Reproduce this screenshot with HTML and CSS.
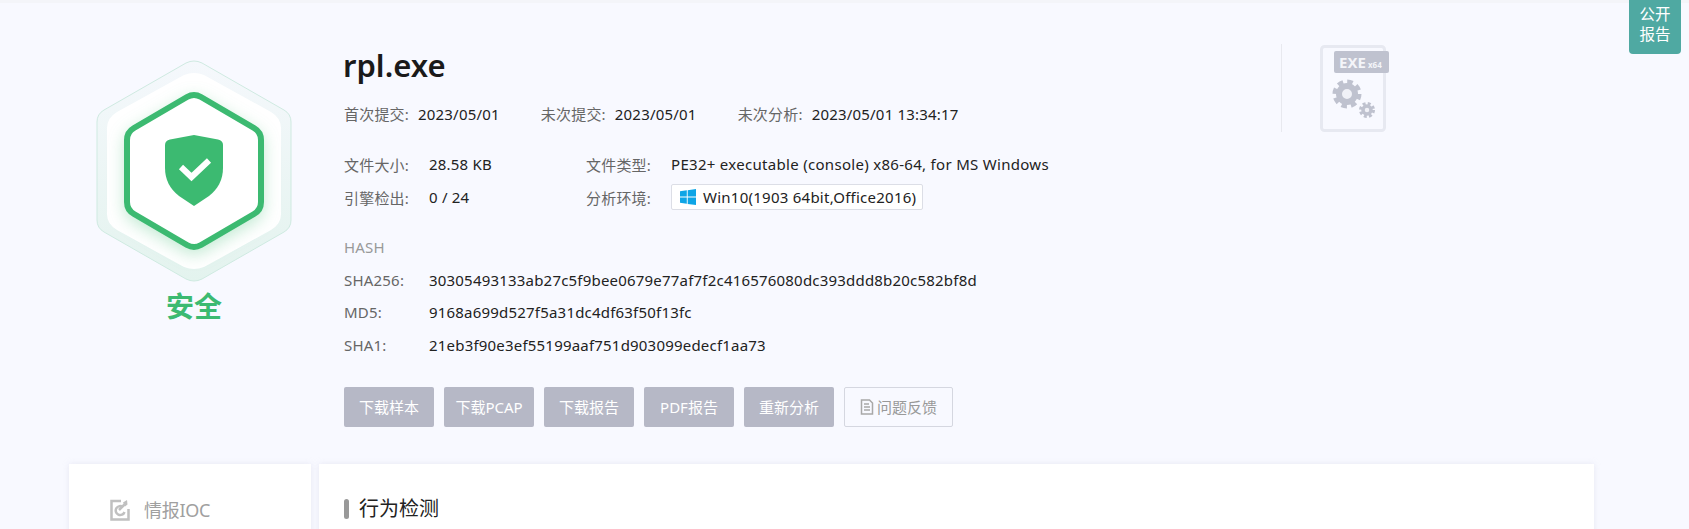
FILE: index.html
```html
<!doctype html>
<html>
  <head>
    <title>rpl.exe - 分析报告</title>
    <link rel="stylesheet" href="styles.css">
  </head>
  <body>
    <div class="top-strip"></div>
    <a class="public-report">公开<br>报告</a>

    <div class="summary">
      <div class="verdict">
        <svg class="hex" width="220" height="240" viewBox="0 0 220 240">
          <defs>
            <linearGradient id="hex-outer" x1="0" y1="0" x2="0" y2="1">
              <stop offset="0" stop-color="#f5f8fc"/>
              <stop offset="1" stop-color="#e3f3ee"/>
            </linearGradient>
          </defs>
          <path class="hex-outer" d="M102 13Q110 9 118 13L200 60Q207 64 207 72L207 170Q207 178 200 182L118 229Q110 233 102 229L20 182Q13 178 13 170L13 72Q13 64 20 60Z"/>
          <path class="hex-middle" d="M100 25Q110 21 120 25L187 62Q197 68 197 78L197 164Q197 174 187 180L120 217Q110 221 100 217L33 180Q23 174 23 164L23 78Q23 68 33 62Z"/>
          <path class="hex-ring" d="M103 47Q110 43 117 47L170 78Q177 82 177 90L177 152Q177 160 170 164L117 195Q110 199 103 195L50 164Q43 160 43 152L43 90Q43 82 50 78Z"/>
          <path class="shield" d="M110 85L134 89.500Q139 90.500 139 95L139 118Q139 135 125 146L110 156L95 146Q81 135 81 118L81 95Q81 90.500 86 89.500Z"/>
          <path class="shield-check" d="M97 117L107.500 127L125 110.500"/>
        </svg>
        <div class="verdict-text">安全</div>
      </div>

      <div class="details">
        <h1 class="file-name">rpl.exe</h1>
        <div class="row dates">
          <span class="pair"><span class="label">首次提交:</span><span class="value">2023/05/01</span></span>
          <span class="pair"><span class="label">未次提交:</span><span class="value">2023/05/01</span></span>
          <span class="pair"><span class="label">未次分析:</span><span class="value">2023/05/01 13:34:17</span></span>
        </div>

        <div class="info-grid">
          <span class="label">文件大小:</span>
          <span class="value">28.58 KB</span>
          <span class="label">文件类型:</span>
          <span class="value wide">PE32+ executable (console) x86-64, for MS Windows</span>
          <span class="label">引擎检出:</span>
          <span class="value">0 / 24</span>
          <span class="label">分析环境:</span>
          <span class="env-tag">
            <svg width="16" height="16" viewBox="0 0 16 16">
              <path class="win" d="M0 2.300L6.800 1.300V7.600H0ZM7.700 1.200L16 0V7.600H7.700ZM0 8.500H6.800V14.800L0 13.800ZM7.700 8.500H16V16L7.700 14.900Z"/>
            </svg>
            Win10(1903 64bit,Office2016)
          </span>
        </div>

        <div class="hash-title">HASH</div>
        <div class="hash-row"><span class="label">SHA256:</span><span class="value">30305493133ab27c5f9bee0679e77af7f2c416576080dc393ddd8b20c582bf8d</span></div>
        <div class="hash-row"><span class="label">MD5:</span><span class="value">9168a699d527f5a31dc4df63f50f13fc</span></div>
        <div class="hash-row"><span class="label">SHA1:</span><span class="value">21eb3f90e3ef55199aaf751d903099edecf1aa73</span></div>

        <div class="actions">
          <button class="btn">下载样本</button>
          <button class="btn">下载PCAP</button>
          <button class="btn">下载报告</button>
          <button class="btn">PDF报告</button>
          <button class="btn">重新分析</button>
          <button class="btn btn-outline">
            <svg width="14" height="16" viewBox="0 0 14 16">
              <path class="note" d="M1.500 1H9.500L12.500 4V15H1.500ZM4 5H9M4 8H10M4 11H10"/>
            </svg>
            问题反馈
          </button>
        </div>
      </div>

      <div class="file-type">
        <svg width="72" height="92" viewBox="0 0 72 92">
          <rect class="file-outline" x="2.500" y="2.500" width="63" height="84" rx="3"/>
          <rect class="file-tag" x="15" y="7" width="55" height="22" rx="2"/>
          <text class="file-ext" x="20" y="24">EXE</text>
          <text class="file-arch" x="49" y="24">x64</text>
          <circle class="gear-teeth" cx="28" cy="50" r="12" stroke-dasharray="5.400 4"/>
          <circle class="gear-body" cx="28" cy="50" r="8" stroke-width="6"/>
          <circle class="gear-teeth small" cx="48" cy="66" r="6.500" stroke-dasharray="2.900 2.200"/>
          <circle class="gear-body" cx="48" cy="66" r="4" stroke-width="3.500"/>
        </svg>
      </div>
    </div>

    <div class="report">
      <div class="side-menu">
        <div class="menu-item">
          <svg width="20" height="22" viewBox="0 0 20 22">
            <path class="ioc-box" d="M11 2H1.500V20.500H18.500V10"/>
            <path class="ioc-mark" d="M13 8A4.500 4.500 0 1 0 14.500 13M9 11L14.500 5.500"/>
            <path class="ioc-tip" d="M13 3.500L17 1L17.500 5.500L15 7.500Z"/>
          </svg>
          情报IOC
        </div>
      </div>
      <div class="content">
        <h2 class="section-title">行为检测</h2>
      </div>
    </div>
  </body>
</html>
```

FILE: styles.css
```css
* {
  box-sizing: border-box;
  margin: 0;
  padding: 0;
}

html,
body {
  height: 100%;
  overflow: hidden;
}

body {
  font-family: 'Noto Sans', 'Noto Sans CJK SC', sans-serif;
  font-size: 15px;
  color: #222;
  background: #f8f9ff;
}

.top-strip {
  height: 3px;
  background: #f4f5f9;
}

.public-report {
  position: absolute;
  top: 0;
  left: 1629px;
  width: 52px;
  height: 54px;
  padding-top: 4px;
  background: #4fa9a2;
  border-radius: 0 0 4px 4px;
  color: #fff;
  font-size: 15.500px;
  line-height: 20px;
  text-align: center;
}

.summary {
  display: flex;
  height: 461px;
  padding-left: 84px;
}

/* verdict hexagon */
.verdict {
  width: 220px;
  padding-top: 47px;
  flex-shrink: 0;
}

.hex {
  display: block;
}

.hex-outer {
  fill: url(#hex-outer);
  stroke: #cfeae1;
  stroke-width: 1;
}

.hex-middle {
  fill: #fff;
}

.hex-ring {
  fill: #fff;
  stroke: #3cba71;
  stroke-width: 6;
  filter: drop-shadow(0 5px 8px rgba(60, 186, 113, 0.3));
}

.shield {
  fill: #3cba71;
}

.shield-check {
  fill: none;
  stroke: #fff;
  stroke-width: 6;
}

.verdict-text {
  margin-top: -2px;
  text-align: center;
  font-size: 28px;
  font-weight: 700;
  line-height: 36px;
  color: #3cba71;
}

/* file details */
.details {
  width: 937px;
  margin-left: 40px;
  padding-top: 40px;
  flex-shrink: 0;
}

.file-name {
  margin-left: -1px;
  font-size: 31px;
  font-weight: 600;
  line-height: 44px;
  color: #1a1a1a;
}

.label {
  color: #666;
  letter-spacing: 0.2px;
}

.value {
  color: #222;
  letter-spacing: 0.2px;
}

.value.wide {
  letter-spacing: 0.3px;
}

.row {
  display: flex;
}

.dates {
  margin-top: 16px;
  line-height: 22px;
  gap: 41px;
}

.pair .label {
  display: inline-block;
  width: 74px;
}

.info-grid {
  display: grid;
  grid-template-columns: 85px 157px 85px 1fr;
  grid-template-rows: 22px 26px;
  row-gap: 9px;
  align-items: center;
  margin-top: 28px;
}

.env-tag {
  display: inline-flex;
  align-items: center;
  gap: 7px;
  width: 252px;
  height: 26px;
  padding-left: 8px;
  background: #fff;
  border: 1px solid #dcdee6;
  border-radius: 2px;
  letter-spacing: 0.25px;
}

.win {
  fill: #0ea5e6;
}

.hash-title {
  margin-top: 26px;
  line-height: 22px;
  letter-spacing: 0.2px;
  color: #999;
}

.hash-row {
  display: flex;
  margin-top: 10.5px;
  line-height: 22px;
}

.hash-row .label {
  width: 85px;
}

.actions {
  display: flex;
  gap: 10px;
  margin-top: 31px;
}

.btn {
  width: 90px;
  height: 40px;
  background: #b6b8c6;
  color: #fff;
  border: none;
  border-radius: 2px;
  font-family: inherit;
  font-size: 15px;
}

.btn-outline {
  display: flex;
  align-items: center;
  justify-content: center;
  gap: 3px;
  width: 109px;
  background: transparent;
  border: 1px solid #d5d7e0;
  color: #999;
}

.note {
  fill: none;
  stroke: #a8a8a8;
  stroke-width: 1.5;
}

/* exe icon */
.file-type {
  display: flex;
  align-items: flex-start;
  height: 88px;
  margin-top: 41px;
  padding-left: 37px;
  border-left: 1px solid #e8e9ef;
}

.file-outline {
  fill: none;
  stroke: #e7e9f1;
  stroke-width: 3;
}

.file-tag {
  fill: #bfc2cf;
}

.file-ext {
  font-size: 15px;
  font-weight: 700;
  fill: #f4f5f9;
}

.file-arch {
  font-size: 8px;
  font-weight: 700;
  fill: #f4f5f9;
}

.gear-teeth {
  fill: none;
  stroke: #bfc2cf;
  stroke-width: 5;
}

.gear-teeth.small {
  stroke-width: 3;
}

.gear-body {
  fill: #f0f1f7;
  stroke: #bfc2cf;
}

/* lower cards */
.report {
  display: flex;
  gap: 8px;
  width: 1525px;
  height: 600px;
  margin-left: 69px;
}

.side-menu,
.content {
  background: #fff;
  box-shadow: 0 0 6px rgba(200, 200, 220, 0.35);
}

.side-menu {
  width: 242px;
  padding: 35px 0 0 41px;
}

.menu-item {
  display: flex;
  align-items: center;
  gap: 14px;
  font-size: 18px;
  line-height: 22px;
  letter-spacing: -0.3px;
  color: #a0a0a0;
}

.ioc-box,
.ioc-mark {
  fill: none;
  stroke: #c0c0c0;
  stroke-width: 2.500;
}

.ioc-tip {
  fill: #c0c0c0;
}

.content {
  flex: 1;
  padding: 31px 0 0 25px;
}

.section-title {
  display: flex;
  align-items: center;
  gap: 10px;
  font-size: 20px;
  font-weight: 400;
  line-height: 28px;
  color: #222;
}

.section-title::before {
  content: '';
  width: 5px;
  height: 20px;
  background: #999;
  border-radius: 3px;
}
```
